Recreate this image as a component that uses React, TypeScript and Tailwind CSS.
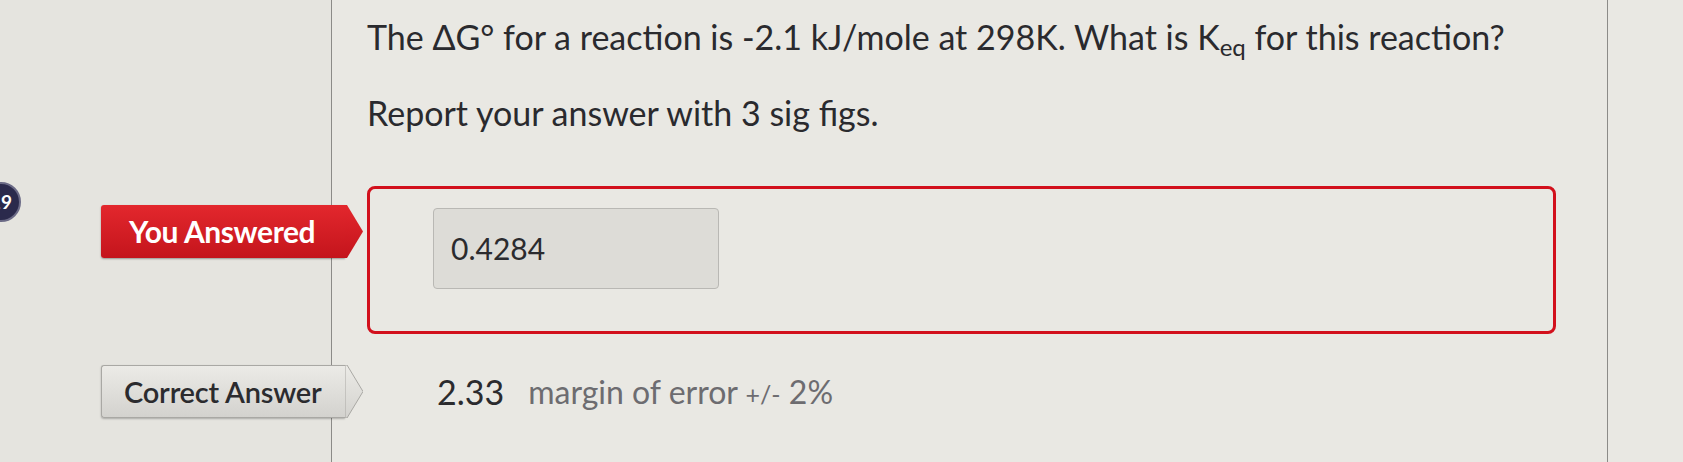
import React from "react";

// arrow-shaped label used in front of the answers
function AnswerTag({ text, variant }: { text: string; variant: "wrong" | "correct" }) {
  const wrong = variant === "wrong";
  return (
    <div className="relative flex h-[53px] w-[262px] shrink-0 items-center">
      <div
        className={
          wrong
            ? "flex h-full w-[244px] items-center rounded-l-[3px] bg-gradient-to-b from-[#e3272d] to-[#c4141c] pl-[28px] shadow-[0_1px_2px_rgba(0,0,0,0.35)]"
            : "flex h-full w-[244px] items-center rounded-l-[3px] border border-r-0 border-[#a9a8a4] bg-gradient-to-b from-[#ecebe7] to-[#d3d2ce] pl-[22px] shadow-[0_1px_2px_rgba(0,0,0,0.25)]"
        }
      >
        <span
          className={
            wrong
              ? "text-[30px] font-bold tracking-[-0.4px] text-white"
              : "text-[29px] font-semibold tracking-[-0.2px] text-[#2b2b2e]"
          }
        >
          {text}
        </span>
      </div>
      <svg className="h-full w-[18px]" viewBox="0 0 18 53" preserveAspectRatio="none">
        <defs>
          <linearGradient id={"g" + variant} x1="0" y1="0" x2="0" y2="1">
            <stop offset="0" stopColor={wrong ? "#e3272d" : "#ecebe7"} />
            <stop offset="1" stopColor={wrong ? "#c4141c" : "#d3d2ce"} />
          </linearGradient>
        </defs>
        <polygon
          points="0,0 2,0 18,26.5 2,53 0,53"
          fill={"url(#g" + variant + ")"}
          stroke={wrong ? "none" : "#a9a8a4"}
          strokeWidth="1"
        />
      </svg>
    </div>
  );
}

export default function App() {
  return (
    <div
      className="flex h-[462px] w-full overflow-hidden bg-[#e9e8e3] text-[#2a2a2e]"
      style={{ fontFamily: "Lato, 'Open Sans', sans-serif" }}
    >
      {/* left gutter with the question number */}
      <div className="w-[332px] shrink-0 border-r border-[#8c8b88] bg-[#e5e4df] pt-[182px]">
        <div className="ml-[-19px] flex h-[40px] w-[40px] items-center justify-center rounded-full border-2 border-[#6b6a86] bg-[#2b2a4c] text-[19px] font-bold text-white">
          19
        </div>
      </div>

      <main className="flex-1 pl-[35px]">
        <p className="mt-[15px] text-[34px] leading-[44px]">
          The ΔG° for a reaction is -2.1 kJ/mole at 298K. What is K
          <sub className="text-[24px]">eq</sub> for this reaction?
        </p>
        <p className="mt-[32px] text-[34px] leading-[44px]">Report your answer with 3 sig figs.</p>

        <div className="mt-[51px] flex items-start">
          <div className="ml-[-266px] mt-[19px] mr-[4px]">
            <AnswerTag text="You Answered" variant="wrong" />
          </div>
          <div className="h-[148px] w-[1189px] rounded-[8px] border-[3px] border-[#d2101c] px-[63px] pt-[19px]">
            <div className="flex h-[81px] w-[286px] items-center rounded-[4px] border border-[#b9b8b4] bg-[#dddcd7] pl-[17px] text-[30px] text-[#2b2b2e]">
              0.4284
            </div>
          </div>
        </div>

        <div className="mt-[31px] flex items-center">
          <div className="ml-[-266px] mr-[74px]">
            <AnswerTag text="Correct Answer" variant="correct" />
          </div>
          <span className="text-[34px] text-[#2b2b2e]">2.33</span>
          <span className="ml-[24px] text-[32px] text-[#6d6c70]">
            margin of error <span className="text-[25px]">+/-</span> 2%
          </span>
        </div>
      </main>

      {/* right gutter */}
      <div className="w-[76px] shrink-0 border-l border-[#8c8b88] bg-[#e9e8e3]" />
    </div>
  );
}
